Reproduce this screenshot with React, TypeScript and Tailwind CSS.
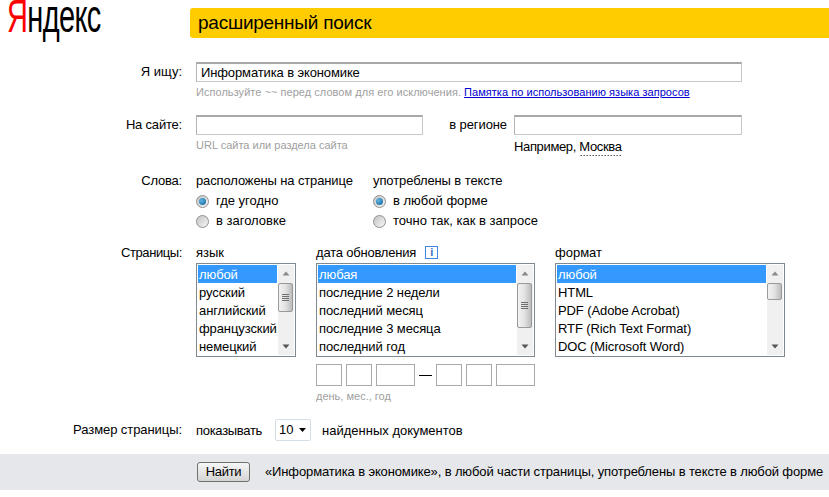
const textInput = "h-[20px] border border-[#c8c8c8] border-t-2 border-t-[#a8a8a8] border-l-[#b4b4b4] bg-white";

function Label({ children }: { children: React.ReactNode }) {
  return <div className="w-[182px] shrink-0 text-right tracking-[-0.2px]">{children}</div>;
}

function Radio({ checked, label }: { checked?: boolean; label: string }) {
  return (
    <div className="flex h-[20px] items-center">
      <span className="flex size-[13px] items-center justify-center rounded-full border border-[#8f8f8f] bg-gradient-to-br from-[#c4c4c4] to-[#f6f6f6]">
        {checked ? (
          <span className="size-[7px] rounded-full bg-[radial-gradient(circle_at_35%_35%,#5fb6e6,#0f5f92)]" />
        ) : null}
      </span>
      <span className="ml-[7px]">{label}</span>
    </div>
  );
}

function ScrollThumb({ height, top, grip }: { height: number; top: number; grip?: boolean }) {
  return (
    <div
      className="absolute left-0 flex w-[15px] flex-col items-center justify-center gap-[1px] rounded-[2px] border border-[#9a9a9a] bg-gradient-to-r from-[#f2f2f2] via-[#e2e2e2] to-[#bcbcbc]"
      style={{ height, top }}
    >
      {grip ? (
        <>
          <span className="h-[1px] w-[7px] bg-[#707070]" />
          <span className="h-[1px] w-[7px] bg-[#707070]" />
          <span className="h-[1px] w-[7px] bg-[#707070]" />
          <span className="h-[1px] w-[7px] bg-[#707070]" />
        </>
      ) : null}
    </div>
  );
}

function ListBox({
  items,
  width,
  thumbHeight,
  grip,
}: {
  items: string[];
  width: number;
  thumbHeight: number;
  grip?: boolean;
}) {
  return (
    <div className="flex h-[94px] border border-[#808890] bg-white p-[1px]" style={{ width }}>
      <div className="min-w-0 flex-1 pr-[1px]">
        {items.map((item, i) => (
          <div
            key={item}
            className={
              i === 0
                ? "h-[18px] whitespace-nowrap bg-[#3399ff] pl-[1px] leading-[20px] tracking-[-0.1px] text-white"
                : "h-[18px] whitespace-nowrap pl-[1px] leading-[20px] tracking-[-0.1px] text-black"
            }
          >
            {item}
          </div>
        ))}
      </div>
      <div className="relative w-[16px] shrink-0 bg-[#f0f0f0]">
        <svg className="absolute left-[4px] top-[6px]" width="8" height="5" viewBox="0 0 8 5">
          <path d="M4 0.5 L7.5 4.5 H0.5 Z" fill="#8a8a8a" />
        </svg>
        <ScrollThumb height={thumbHeight} top={18} grip={grip} />
        <svg className="absolute bottom-[6px] left-[4px]" width="8" height="5" viewBox="0 0 8 5">
          <path d="M0.5 0.5 H7.5 L4 4.5 Z" fill="#555" />
        </svg>
      </div>
    </div>
  );
}

function DateBox({ width }: { width: number }) {
  return <div className="h-[22px] border border-[#aaaaaa] bg-white" style={{ width }} />;
}

export default function App() {
  return (
    <div className="relative h-[497px] w-[829px] overflow-hidden bg-white font-['Liberation_Sans',Arial,sans-serif] text-[13px] leading-[16px] text-black">
      <div className="flex h-[38px] items-start">
        <div className="flex h-[38px] w-[190px] shrink-0 items-start pl-[7px]">
          <div className="origin-left scale-x-[0.63] whitespace-nowrap text-[46px] leading-[32px] tracking-[-1px]">
            <span className="text-[#ff0000]">Я</span>
            <span>ндекс</span>
          </div>
        </div>
        <div className="mt-[8px] flex h-[30px] flex-1 items-center rounded-l-[3px] bg-[#ffcc00] pl-[8px] text-[19px] tracking-[-0.25px]">
          расширенный поиск
        </div>
      </div>

      <div className="mt-[24px] flex">
        <Label>
          <div className="pt-[2px] tracking-normal">Я ищу:</div>
        </Label>
        <div className="ml-[14px]">
          <div className={`${textInput} w-[546px] pl-[4px] leading-[17px] tracking-[-0.12px]`}>Информатика в экономике</div>
          <div className="mt-[2px] h-[16px] text-[11px] tracking-[0.04px] text-[#a0a0a0]">
            Используйте ~~ перед словом для его исключения.{" "}
            <span className="text-[#0000cc] underline">Памятка по использованию языка запросов</span>
          </div>
        </div>
      </div>

      <div className="mt-[15px] flex">
        <Label>
          <div className="pt-[2px]">На сайте:</div>
        </Label>
        <div className="ml-[14px] w-[227px]">
          <div className={textInput} />
          <div className="mt-[2px] text-[11px] text-[#a0a0a0]">URL сайта или раздела сайта</div>
        </div>
        <div className="w-[91px] pr-[7px] pt-[2px] text-right tracking-[-0.1px]">в регионе</div>
        <div className="w-[228px]">
          <div className={textInput} />
          <div className="mt-[4px] tracking-[-0.35px]">
            Например,{" "}
            <span className="bg-[linear-gradient(to_right,#000_1px,transparent_1px)] bg-[length:3px_1px] bg-bottom bg-repeat-x pb-[2px]">
              Москва
            </span>
          </div>
        </div>
      </div>

      <div className="mt-[18px] flex">
        <Label>Слова:</Label>
        <div className="ml-[14px] w-[177px]">
          <div className="mb-[2px] tracking-[-0.13px]">расположены на странице</div>
          <Radio checked label="где угодно" />
          <Radio label="в заголовке" />
        </div>
        <div>
          <div className="mb-[2px] tracking-[-0.1px]">употреблены в тексте</div>
          <Radio checked label="в любой форме" />
          <Radio label="точно так, как в запросе" />
        </div>
      </div>

      <div className="mt-[14px] flex">
        <Label>
          <div className="tracking-[-0.4px]">Страницы:</div>
        </Label>
        <div className="ml-[14px] flex gap-[20px]">
          <div>
            <div className="h-[18px]">язык</div>
            <ListBox
              width={100}
              thumbHeight={29}
              grip
              items={["любой", "русский", "английский", "французский", "немецкий"]}
            />
          </div>
          <div>
            <div className="flex h-[18px] items-start tracking-[-0.2px]">
              дата обновления
              <span className="ml-[9px] mt-[1px] flex size-[13px] items-center justify-center border border-[#3f86e8] text-[11px] font-bold leading-none text-[#3a70c0]">
                i
              </span>
            </div>
            <ListBox
              width={219}
              thumbHeight={45}
              grip
              items={["любая", "последние 2 недели", "последний месяц", "последние 3 месяца", "последний год"]}
            />
            <div className="mt-[7px] flex items-center">
              <DateBox width={26} />
              <div className="ml-[4px]">
                <DateBox width={26} />
              </div>
              <div className="ml-[4px]">
                <DateBox width={39} />
              </div>
              <div className="mx-[4px] h-[1px] w-[13px] bg-black" />
              <DateBox width={26} />
              <div className="ml-[4px]">
                <DateBox width={26} />
              </div>
              <div className="ml-[4px]">
                <DateBox width={39} />
              </div>
            </div>
            <div className="mt-[2px] text-[11px] text-[#a0a0a0]">день, мес., год</div>
          </div>
          <div>
            <div className="h-[18px]">формат</div>
            <ListBox
              width={230}
              thumbHeight={17}
              items={["любой", "HTML", "PDF (Adobe Acrobat)", "RTF (Rich Text Format)", "DOC (Microsoft Word)"]}
            />
          </div>
        </div>
      </div>

      <div className="absolute left-0 right-0 top-[419px] flex items-center">
        <Label>
          <div className="tracking-[-0.07px]">Размер страницы:</div>
        </Label>
        <div className="ml-[14px] pt-[2px] tracking-[-0.3px]">показывать</div>
        <div className="ml-[13px] flex h-[22px] w-[36px] items-center justify-between rounded-[2px] border border-[#d5dde5] bg-white pl-[3px] pr-[4px]">
          10
          <svg width="7" height="4" viewBox="0 0 7 4">
            <path d="M0 0 H7 L3.5 4 Z" fill="#000" />
          </svg>
        </div>
        <div className="ml-[11px] pt-[2px]">найденных документов</div>
      </div>

      <div className="absolute left-0 right-0 top-[454px] flex h-[36px] items-center bg-[#e6e7ea] pl-[197px]">
        <div className="flex h-[20px] w-[53px] items-center justify-center rounded-[3px] border border-[#707070] bg-gradient-to-b from-[#f6f6f6] to-[#d4d4d4] tracking-[-0.3px]">
          Найти
        </div>
        <div className="ml-[15px] whitespace-nowrap tracking-[-0.13px]">
          «Информатика в экономике», в любой части страницы, употреблены в тексте в любой форме
        </div>
      </div>
    </div>
  );
}
